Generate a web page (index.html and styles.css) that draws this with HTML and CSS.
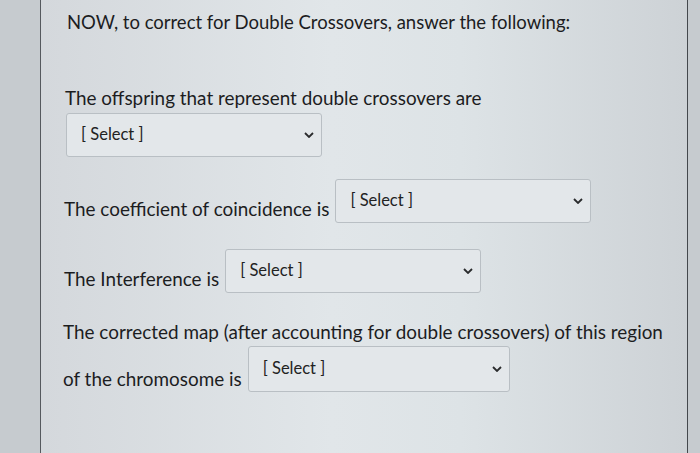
FILE: index.html
```html
<!DOCTYPE html>
<html lang="en">
<head>
    <meta charset="UTF-8">
    <meta name="viewport" content="width=device-width, initial-scale=1.0">
    <title>Double Crossovers</title>
    <link rel="stylesheet" href="styles.css">
</head>
<body>
    <div class="page">
        <p class="intro">NOW, to correct for Double Crossovers, answer the following:</p>

        <!-- Question 1: dropdown sits under its label -->
        <p class="question first">The offspring that represent double crossovers are</p>
        <div class="dropdown">
            <span>[ Select ]</span>
            <svg class="chev" viewBox="0 0 10 6"><path d="M1 1l4 4 4-4"/></svg>
        </div>

        <!-- Inline questions -->
        <div class="row coef">
            <span class="label">The coefficient of coincidence is</span>
            <div class="dropdown">
                <span>[ Select ]</span>
                <svg class="chev" viewBox="0 0 10 6"><path d="M1 1l4 4 4-4"/></svg>
            </div>
        </div>

        <div class="row interf">
            <span class="label">The Interference is</span>
            <div class="dropdown">
                <span>[ Select ]</span>
                <svg class="chev" viewBox="0 0 10 6"><path d="M1 1l4 4 4-4"/></svg>
            </div>
        </div>

        <p class="question map">The corrected map (after accounting for double crossovers) of this region</p>
        <div class="row chromo">
            <span class="label">of the chromosome is</span>
            <div class="dropdown wide">
                <span>[ Select ]</span>
                <svg class="chev" viewBox="0 0 10 6"><path d="M1 1l4 4 4-4"/></svg>
            </div>
        </div>
    </div>
</body>
</html>
```

FILE: styles.css
```css
/* General styles */
html, body {
    overflow: hidden;
}

body {
    margin: 0;
    padding: 0 12px 0 40px;
    background: #c6cbcf;
    font-family: 'Lato', sans-serif;
    color: #1c1d1f;
}

/* the sheet, with its two edge lines */
.page {
    box-sizing: border-box;
    height: 453px;
    padding: 10px 0 0 24px;
    border-left: 1px solid #55595e;
    border-right: 1px solid #44484d;
    background: linear-gradient(90deg, #d4d8dc, #e1e6e9 45%, #dde3e6 65%, #cdd2d6);
}

p {
    margin: 0;
}

.intro {
    font-size: 18.5px;
    line-height: 24px;
    margin-left: 2px;
}

.question {
    font-size: 18.9px;
    line-height: 24px;
}

.question.first {
    margin-top: 52px;
}

/* Fake select box */
.dropdown {
    box-sizing: border-box;
    width: 256px;
    height: 44px;
    display: flex;
    align-items: center;
    justify-content: space-between;
    padding: 0 7px 0 14px;
    border: 1px solid #b9bfc4;
    border-radius: 3px;
    background: #e3e7ea;
    font-size: 16.5px;
    color: #222;
}

.dropdown span {
    margin-top: -2px;
}

.dropdown.wide {
    width: 262px;
    height: 46px;
}

.first + .dropdown {
    margin-top: 3px;
    margin-left: 1px;
}

.chev {
    width: 10px;
    height: 6px;
    fill: none;
    stroke: #2a2b2d;
    stroke-width: 1.8;
}

.row {
    display: flex;
    align-items: flex-start;
}

.row .label {
    font-size: 18.9px;
    line-height: 24px;
    margin-right: 6px;
}

.coef {
    margin-top: 22px;
    margin-left: -1px;
}

.coef .label {
    margin-top: 18px;
}

.interf {
    margin-top: 26px;
    margin-left: -1px;
}

.interf .label {
    margin-top: 18px;
}

.question.map {
    margin-top: 27px;
    margin-left: -2px;
}

.chromo {
    margin-top: 2px;
    margin-left: -2px;
}

.chromo .label {
    margin-top: 21px;
}
```
